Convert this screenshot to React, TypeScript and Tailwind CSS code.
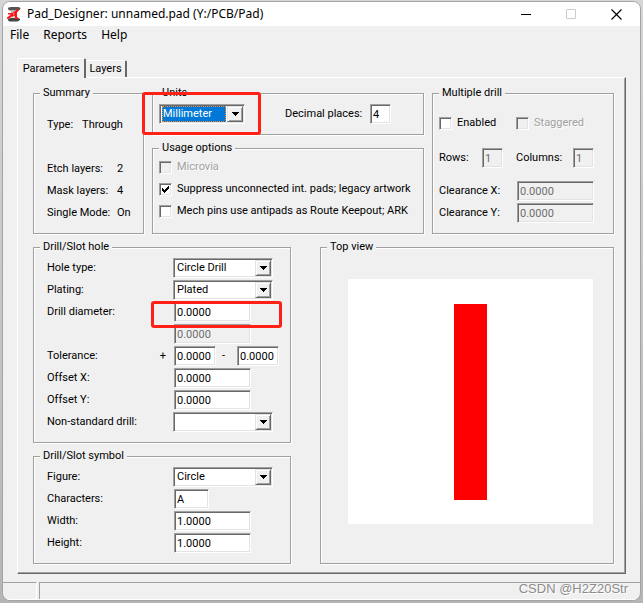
import type { ReactNode } from "react";

const sunken =
  "border border-t-[#a0a0a0] border-l-[#a0a0a0] border-b-white border-r-white shadow-[inset_1px_1px_0_#696969,inset_-1px_-1px_0_#e3e3e3]";

function Group({ title, className = "", bodyClass = "", children }: { title: string; className?: string; bodyClass?: string; children: ReactNode }) {
  return (
    <fieldset
      className={`min-w-0 border border-[#a0a0a0] shadow-[1px_1px_0_#fff,inset_1px_1px_0_#fff] ${className}`}
    >
      <legend className="ml-[6px] h-3 bg-[#f0f0f0] px-[3px] leading-3">{title}</legend>
      <div className={bodyClass}>{children}</div>
    </fieldset>
  );
}

function TextBox({ id, value, width = "w-[77px]", disabled = false, label }: { id: string; value: string; width?: string; disabled?: boolean; label?: string }) {
  return (
    <input
      id={id}
      type="text"
      aria-label={label}
      defaultValue={value}
      disabled={disabled}
      className={`ml-px h-5 shrink-0 bg-white pl-[2px] outline-none disabled:bg-[#f0f0f0] disabled:text-[#6d6d6d] ${sunken} ${width}`}
    />
  );
}

function Select({ id, options, width = "w-[100px]", active = false }: { id: string; options: string[]; width?: string; active?: boolean }) {
  return (
    <div className={`relative flex h-5 shrink-0 bg-white p-[1px] ${sunken} ${width}`}>
      <select
        id={id}
        className={`w-full appearance-none leading-4 ${
          active ? "mr-[17px] ml-px bg-[#0078d7] pl-px text-white outline-1 -outline-offset-1 outline-dotted outline-[#ff8728]" : "pl-[2px] outline-none"
        }`}
      >
        {options.map((o) => (
          <option key={o}>{o}</option>
        ))}
      </select>
      <span className="pointer-events-none absolute inset-y-px right-px flex w-4 items-center justify-center border border-t-[#e3e3e3] border-r-[#696969] border-b-[#696969] border-l-[#e3e3e3] bg-[#f0f0f0] shadow-[inset_1px_1px_0_#fff,inset_-1px_-1px_0_#a0a0a0]">
        <svg width="7" height="4" viewBox="0 0 7 4" shapeRendering="crispEdges">
          <path d="M0 0h7v1h-1v1h-1v1h-1v1h-1v-1h-1v-1h-1v-1h-1z" />
        </svg>
      </span>
    </div>
  );
}

function Check({ label, checked = false, disabled = false, className = "" }: { label: string; checked?: boolean; disabled?: boolean; className?: string }) {
  return (
    <label className={`flex h-[22px] items-center gap-[5px] whitespace-nowrap ${className}`}>
      <span className="relative flex">
        <input
          type="checkbox"
          defaultChecked={checked}
          disabled={disabled}
          className={`peer size-[13px] appearance-none bg-white disabled:bg-[#f0f0f0] ${sunken}`}
        />
        <svg className="pointer-events-none absolute inset-[3px] hidden peer-checked:block" width="7" height="7" viewBox="0 0 7 7" shapeRendering="crispEdges">
          <path d="M0 2h1v1h1v1h1v-1h1v-1h1v-1h1v-1h1v3h-1v1h-1v1h-1v1h-1v1h-1v-1h-1v-1h-1z" />
        </svg>
      </span>
      <span className={disabled ? "text-[#a0a0a0] [text-shadow:1px_1px_0_#fff]" : ""}>{label}</span>
    </label>
  );
}

function Row({ id, label, sign, children }: { id: string; label: string; sign?: string; children: ReactNode }) {
  return (
    <div className="flex h-[22px] items-center pl-[13px]">
      <label htmlFor={id} className="flex w-[126px] shrink-0 justify-between pr-[7px]">
        {label}
        {sign && <span>{sign}</span>}
      </label>
      {children}
    </div>
  );
}

function SummaryRow({ label, value }: { label: string; value: string }) {
  return (
    <div className="flex h-[22px] items-center pl-[13px]">
      <span className="w-[70px]">{label}</span>
      <span>{value}</span>
    </div>
  );
}

function Highlight({ className }: { className: string }) {
  return <div className={`pointer-events-none absolute z-10 rounded-[3px] border-3 border-[#ff2116] ${className}`} />;
}

function AppIcon() {
  return (
    <svg width="14" height="15" viewBox="0 0 14 15">
      <path d="M1 1.500Q1 0 4 0h7q2.500 0 2.500 1.500T11 3.500H4Q1 3.500 1 1.500z" fill="#555" />
      <path d="M4 3.500h6v7H4z" fill="#bbb" />
      <path d="M1 12.500Q1 11 4 11h6q3 0 3 1.500T10 14.500H4Q1 14.500 1 12.500z" fill="#444" />
      <path d="M13 2 10 2.500 5.500 6 1 6v1.500h3L0 10.500V12l2-.5 3-2 3-1v3.500h3.500v-1L10 10V5.500z" fill="#f11" />
      <path d="M6 6.500h2l-2 1.500z" fill="#ddd" />
    </svg>
  );
}

export default function App() {
  return (
    <div className="flex min-h-screen bg-linear-to-b from-[#d6d6d6] to-[#b4b6b6] px-[2px] pt-px pb-[2px] font-[Roboto,'Liberation_Sans',sans-serif] text-[11px] leading-4 text-black">
      <div className="flex w-full flex-col overflow-hidden rounded-lg border border-[#a4a4a4] bg-[#f0f0f0]">
        {/* title bar */}
        <header className="flex h-6 items-center bg-white pl-1 font-['Noto_Sans','Open_Sans',sans-serif] text-[12px]">
          <AppIcon />
          <h1 className="ml-[6px] flex-1 whitespace-nowrap">Pad_Designer: unnamed.pad (Y:/PCB/Pad)</h1>
          <button aria-label="Minimize" className="flex h-full w-[45px] items-center justify-center">
            <svg width="10" height="10" viewBox="0 0 10 10" shapeRendering="crispEdges"><path d="M0 5h10v1H0z" /></svg>
          </button>
          <button aria-label="Maximize" disabled className="flex h-full w-[45px] items-center justify-center">
            <svg width="10" height="10" viewBox="0 0 10 10" fill="none" stroke="#ccc"><rect x=".5" y=".5" width="9" height="9" rx=".5" /></svg>
          </button>
          <button aria-label="Close" className="flex h-full w-[47px] items-center justify-center">
            <svg width="11" height="11" viewBox="0 0 11 11" fill="none" stroke="#000" strokeWidth="1.200"><path d="M.5.5l10 10M10.500.5l-10 10" /></svg>
          </button>
        </header>

        <nav className="flex h-[18px] items-center gap-[14px] pl-[7px] font-['Noto_Sans','Open_Sans',sans-serif] text-[12px]">
          <button>File</button>
          <button>Reports</button>
          <button>Help</button>
        </nav>

        <main className="mx-[14px] mt-[14px] flex flex-1 flex-col">
          <div role="tablist" className="flex items-end">
            <button role="tab" aria-selected="true" className="relative z-10 -mb-px h-5 w-[69px] rounded-t-xs border-t border-r-2 border-l border-t-white border-r-[#696969] border-l-white bg-[#f0f0f0]">
              Parameters
            </button>
            <button role="tab" aria-selected="false" className="h-[17px] w-[41px] rounded-t-xs border-t border-r-2 border-t-white border-r-[#696969]">
              Layers
            </button>
          </div>

          <div role="tabpanel" className="border border-t-white border-r-[#696969] border-b-[#696969] border-l-white pt-[9px] pr-[11px] pb-[9px] pl-[15px] shadow-[inset_-1px_-1px_0_#a0a0a0]">
            <div className="flex gap-2">
              <Group title="Summary" className="w-[111px] shrink-0" bodyClass="pt-[15px] pb-[9px]">
                <div className="flex h-[22px] items-center gap-[9px] pl-[13px]">
                  <span>Type:</span>
                  <span>Through</span>
                </div>
                <div className="h-[22px]" />
                <SummaryRow label="Etch layers:" value="2" />
                <SummaryRow label="Mask layers:" value="4" />
                <SummaryRow label="Single Mode:" value="On" />
              </Group>

              <div className="flex min-w-0 flex-1 flex-col gap-[7px]">
                <Group title="Units" bodyClass="pt-1 pb-[9px]">
                  <div className="relative flex h-[22px] items-center pl-[6px]">
                    <Select id="units" options={["Millimeter", "Mils", "Inch"]} width="w-[86px]" active />
                    <label htmlFor="decimals" className="ml-10 w-[84px] whitespace-nowrap">Decimal places:</label>
                    <TextBox id="decimals" value="4" width="w-[21px]" />
                    <Highlight className="-top-[11px] -left-[11px] h-[43px] w-[119px]" />
                  </div>
                </Group>
                <Group title="Usage options" className="flex-1" bodyClass="pt-[2px] pb-[9px] pl-[6px]">
                  <Check label="Microvia" disabled />
                  <Check label="Suppress unconnected int. pads; legacy artwork" checked />
                  <Check label="Mech pins use antipads as Route Keepout; ARK" />
                </Group>
              </div>

              <Group title="Multiple drill" className="w-[182px] shrink-0" bodyClass="pt-[13px] pb-[9px] pl-[6px]">
                <div className="flex">
                  <Check label="Enabled" className="w-[77px]" />
                  <Check label="Staggered" disabled />
                </div>
                <div className="mt-[13px] flex h-[22px] items-center">
                  <label htmlFor="rows" className="w-[42px]">Rows:</label>
                  <TextBox id="rows" value="1" width="w-[21px]" disabled />
                  <label htmlFor="columns" className="ml-[13px] w-[56px]">Columns:</label>
                  <TextBox id="columns" value="1" width="w-[21px]" disabled />
                </div>
                <div className="mt-[11px] flex h-[22px] items-center">
                  <label htmlFor="clearance-x" className="w-[77px]">Clearance X:</label>
                  <TextBox id="clearance-x" value="0.0000" disabled />
                </div>
                <div className="flex h-[22px] items-center">
                  <label htmlFor="clearance-y" className="w-[77px]">Clearance Y:</label>
                  <TextBox id="clearance-y" value="0.0000" disabled />
                </div>
              </Group>
            </div>

            <div className="mt-[7px] flex gap-[29px]">
              <div className="flex w-[258px] shrink-0 flex-col gap-[7px]">
                <Group title="Drill/Slot hole" bodyClass="pt-1 pb-[9px]">
                  <Row id="hole-type" label="Hole type:">
                    <Select id="hole-type" options={["Circle Drill", "Oval Slot", "Rectangle Slot"]} />
                  </Row>
                  <Row id="plating" label="Plating:">
                    <Select id="plating" options={["Plated", "Non-Plated", "Optional"]} />
                  </Row>
                  <Row id="diameter" label="Drill diameter:">
                    <div className="relative flex">
                      <TextBox id="diameter" value="0.0000" />
                      <Highlight className="-top-[1px] -left-[22px] h-[27px] w-[131px]" />
                    </div>
                  </Row>
                  <Row id="slot-size" label="">
                    <TextBox id="slot-size" label="Slot size Y" value="0.0000" disabled />
                  </Row>
                  <Row id="tolerance" label="Tolerance:" sign="+">
                    <TextBox id="tolerance" value="0.0000" width="w-[42px]" />
                    <span className="w-5 pl-[6px]">-</span>
                    <TextBox id="tolerance-minus" label="Negative tolerance" value="0.0000" width="w-[42px]" />
                  </Row>
                  <Row id="offset-x" label="Offset X:">
                    <TextBox id="offset-x" value="0.0000" />
                  </Row>
                  <Row id="offset-y" label="Offset Y:">
                    <TextBox id="offset-y" value="0.0000" />
                  </Row>
                  <Row id="non-standard" label="Non-standard drill:">
                    <Select id="non-standard" options={["", "Laser", "Plasma", "Punch"]} />
                  </Row>
                </Group>

                <Group title="Drill/Slot symbol" bodyClass="pt-1 pb-[9px]">
                  <Row id="figure" label="Figure:">
                    <Select id="figure" options={["Circle", "Square", "Hexagon X"]} />
                  </Row>
                  <Row id="characters" label="Characters:">
                    <TextBox id="characters" value="A" width="w-[35px]" />
                  </Row>
                  <Row id="width" label="Width:">
                    <TextBox id="width" value="1.0000" />
                  </Row>
                  <Row id="height" label="Height:">
                    <TextBox id="height" value="1.0000" />
                  </Row>
                </Group>
              </div>

              <Group title="Top view" className="flex-1" bodyClass="pt-[26px] pr-5 pl-[27px]">
                <svg viewBox="0 0 245 245" className="w-full bg-white" shapeRendering="crispEdges">
                  <rect x="106" y="25" width="33" height="196" fill="#f00" />
                </svg>
              </Group>
            </div>
          </div>
        </main>

        {/* status bar */}
        <footer className="mt-2 flex h-[18px] gap-[2px] border-b border-b-white">
          <div className="w-[34px] border-t border-r border-t-[#a0a0a0] border-r-white" />
          <div className="flex flex-1 items-start justify-end border-t border-l border-[#a0a0a0] pr-3 font-['Liberation_Sans',Arial,sans-serif] text-[13px] leading-3 text-[#8c8c8c] [text-shadow:1px_1px_0_#fff]">
            CSDN @H2Z20Str
          </div>
        </footer>
      </div>
    </div>
  );
}
